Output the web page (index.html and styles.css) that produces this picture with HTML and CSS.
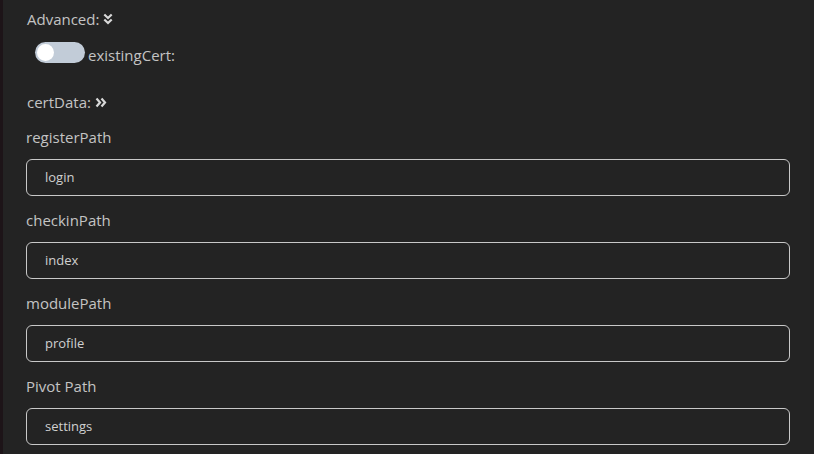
FILE: index.html
```html
<!DOCTYPE html>
<html>
<head>
<meta charset="utf-8">
<link rel="stylesheet" href="styles.css">
</head>
<body>
<div class="page">
  <div class="edge"></div>
  <div class="content">
    <div class="toggle-row">Advanced:
      <svg class="icon" width="10" height="12" viewBox="0 0 10 12"><path d="M1.3 1.5 L5 5 L8.7 1.5 M1.3 6.5 L5 10 L8.7 6.5" fill="none" stroke="currentColor" stroke-width="2.2"/></svg>
    </div>
    <div class="switch-row">
      <span class="switch"><span class="knob"></span></span>
      <span class="switch-label">existingCert:</span>
    </div>
    <div class="toggle-row cert">certData:
      <svg class="icon" width="12" height="11" viewBox="0 0 12 11"><path d="M1.5 1.5 L5 5.5 L1.5 9.5 M6.5 1.5 L10 5.5 L6.5 9.5" fill="none" stroke="currentColor" stroke-width="2.2"/></svg>
    </div>
    <div class="field first">
      <label class="label">registerPath</label>
      <div class="input">login</div>
    </div>
    <div class="field">
      <label class="label">checkinPath</label>
      <div class="input">index</div>
    </div>
    <div class="field">
      <label class="label">modulePath</label>
      <div class="input">profile</div>
    </div>
    <div class="field">
      <label class="label">Pivot Path</label>
      <div class="input">settings</div>
    </div>
  </div>
</div>
</body>
</html>
```
FILE: styles.css
```css
html, body {
  margin: 0;
  padding: 0;
  background: #232323;
  font-family: "Open Sans", "Noto Sans", sans-serif;
  color: #c4c4c4;
}
.page {
  display: flex;
  height: 454px;
  overflow: hidden;
}
.edge {
  width: 3px;
  background: #1d1418;
  flex: none;
}
.content {
  flex: 1;
  padding: 9px 24px 0 23px;
}
.toggle-row {
  display: flex;
  align-items: center;
  gap: 4px;
  font-size: 15px;
  height: 20px;
  line-height: 20px;
  padding-left: 1px;
}
.icon { color: #d8d8d8; }
.switch-row {
  display: flex;
  align-items: flex-start;
  margin-top: 13px;
  padding-left: 9px;
}
.switch {
  width: 50px;
  height: 21px;
  border-radius: 11px;
  background: #c2ccd8;
  display: flex;
  align-items: center;
  padding-left: 2px;
  box-sizing: border-box;
}
.knob {
  width: 17px;
  height: 17px;
  border-radius: 50%;
  background: #fff;
}
.switch-label {
  font-size: 15px;
  line-height: 20px;
  margin-left: 3px;
  margin-top: 3px;
}
.cert {
  margin-top: 27px;
}
.field {
  display: flex;
  flex-direction: column;
}
.field.first { margin-top: 15px; }
.label {
  font-size: 15px;
  height: 20px;
  line-height: 20px;
}
.input {
  margin-top: 12px;
  height: 37px;
  box-sizing: border-box;
  border: 1.5px solid #c8c8c8;
  border-radius: 6px;
  font-size: 13px;
  line-height: 34px;
  padding-left: 18px;
  color: #d0d0d0;
  margin-bottom: 14px;
}
```
